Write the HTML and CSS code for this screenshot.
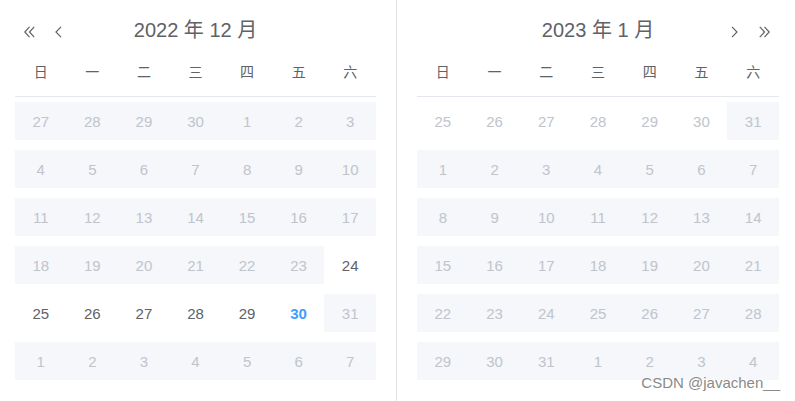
FILE: index.html
```html
<!DOCTYPE html>
<html lang="zh">
<head>
<meta charset="utf-8">
<link rel="stylesheet" href="styles.css">
</head>
<body>
<div class="picker">
  <div class="panel panel-left">
    <div class="header">
      <div class="nav nav-left">
        <svg class="ic ic-double" viewBox="0 0 11 12"><path d="M5.5 0.8 L0.8 6 L5.5 11.2 M10.2 0.8 L5.5 6 L10.2 11.2"/></svg>
        <svg class="ic ic-single" viewBox="0 0 7 12"><path d="M6 0.8 L1 6 L6 11.2"/></svg>
      </div>
      <div class="title">2022 年 12 月</div>
      <div class="nav"></div>
    </div>
    <div class="weekdays"><span>日</span><span>一</span><span>二</span><span>三</span><span>四</span><span>五</span><span>六</span></div>
    <div class="days">
      <span class="d off bg">27</span><span class="d off bg">28</span><span class="d off bg">29</span><span class="d off bg">30</span><span class="d off bg">1</span><span class="d off bg">2</span><span class="d off bg">3</span>
      <span class="d off bg">4</span><span class="d off bg">5</span><span class="d off bg">6</span><span class="d off bg">7</span><span class="d off bg">8</span><span class="d off bg">9</span><span class="d off bg">10</span>
      <span class="d off bg">11</span><span class="d off bg">12</span><span class="d off bg">13</span><span class="d off bg">14</span><span class="d off bg">15</span><span class="d off bg">16</span><span class="d off bg">17</span>
      <span class="d off bg">18</span><span class="d off bg">19</span><span class="d off bg">20</span><span class="d off bg">21</span><span class="d off bg">22</span><span class="d off bg">23</span><span class="d">24</span>
      <span class="d">25</span><span class="d">26</span><span class="d">27</span><span class="d">28</span><span class="d">29</span><span class="d today">30</span><span class="d off bg">31</span>
      <span class="d off bg">1</span><span class="d off bg">2</span><span class="d off bg">3</span><span class="d off bg">4</span><span class="d off bg">5</span><span class="d off bg">6</span><span class="d off bg">7</span>
    </div>
  </div>
  <div class="panel panel-right">
    <div class="header">
      <div class="nav"></div>
      <div class="title">2023 年 1 月</div>
      <div class="nav nav-right">
        <svg class="ic ic-single" viewBox="0 0 7 12"><path d="M1 0.8 L6 6 L1 11.2"/></svg>
        <svg class="ic ic-double" viewBox="0 0 11 12"><path d="M0.8 0.8 L5.5 6 L0.8 11.2 M5.5 0.8 L10.2 6 L5.5 11.2"/></svg>
      </div>
    </div>
    <div class="weekdays"><span>日</span><span>一</span><span>二</span><span>三</span><span>四</span><span>五</span><span>六</span></div>
    <div class="days">
      <span class="d off">25</span><span class="d off">26</span><span class="d off">27</span><span class="d off">28</span><span class="d off">29</span><span class="d off">30</span><span class="d off bg">31</span>
      <span class="d off bg">1</span><span class="d off bg">2</span><span class="d off bg">3</span><span class="d off bg">4</span><span class="d off bg">5</span><span class="d off bg">6</span><span class="d off bg">7</span>
      <span class="d off bg">8</span><span class="d off bg">9</span><span class="d off bg">10</span><span class="d off bg">11</span><span class="d off bg">12</span><span class="d off bg">13</span><span class="d off bg">14</span>
      <span class="d off bg">15</span><span class="d off bg">16</span><span class="d off bg">17</span><span class="d off bg">18</span><span class="d off bg">19</span><span class="d off bg">20</span><span class="d off bg">21</span>
      <span class="d off bg">22</span><span class="d off bg">23</span><span class="d off bg">24</span><span class="d off bg">25</span><span class="d off bg">26</span><span class="d off bg">27</span><span class="d off bg">28</span>
      <span class="d off bg">29</span><span class="d off bg">30</span><span class="d off bg">31</span><span class="d off bg">1</span><span class="d off bg">2</span><span class="d off bg">3</span><span class="d off bg">4</span>
    </div>
  </div>
  <div class="watermark">CSDN @javachen__</div>
</div>
</body>
</html>
```
FILE: styles.css
```css
html, body {
  margin: 0;
  padding: 0;
  background: #ffffff;
}
body {
  font-family: "Liberation Sans", "Noto Sans CJK SC", sans-serif;
  color: #606266;
}
.picker {
  position: relative;
  display: flex;
  width: 795px;
  height: 401px;
  overflow: hidden;
}
.panel {
  box-sizing: border-box;
  height: 401px;
}
.panel-left {
  width: 397px;
  padding: 0 20px 0 15px;
  border-right: 1px solid #e4e4e4;
}
.panel-right {
  flex: 1;
  padding: 0 16px 0 20px;
}
.header {
  height: 60px;
  display: grid;
  grid-template-columns: 1fr auto 1fr;
  align-items: center;
}
.title {
  font-size: 20px;
  line-height: 24px;
  color: #606266;
}
.nav {
  display: flex;
  align-items: center;
  height: 12px;
  padding-top: 3px;
}
.nav-left {
  padding-left: 9px;
  gap: 20px;
}
.nav-right {
  justify-content: flex-end;
  padding-right: 9px;
  gap: 21px;
}
.ic {
  height: 12px;
  fill: none;
  stroke: #606266;
  stroke-width: 1.2;
  display: block;
}
.ic-double { width: 11px; }
.ic-single { width: 7px; }
.weekdays {
  display: grid;
  grid-template-columns: repeat(7, 1fr);
  height: 24px;
  line-height: 24px;
  padding-bottom: 12px;
  border-bottom: 1px solid #e4e7ed;
  font-size: 14px;
  text-align: center;
  color: #606266;
}
.days {
  display: grid;
  grid-template-columns: repeat(7, 1fr);
  grid-auto-rows: 38px;
  row-gap: 10px;
  margin-top: 5px;
}
.d {
  display: flex;
  align-items: center;
  justify-content: center;
  font-size: 15px;
  color: #606266;
}
.d.off { color: #c0c4cc; }
.d.bg { background: #f5f7fa; }
.d.today {
  color: #409eff;
  font-weight: bold;
}
.watermark {
  position: absolute;
  right: 15px;
  top: 374px;
  font-size: 15px;
  line-height: 18px;
  color: #8a8a8a;
}
```
